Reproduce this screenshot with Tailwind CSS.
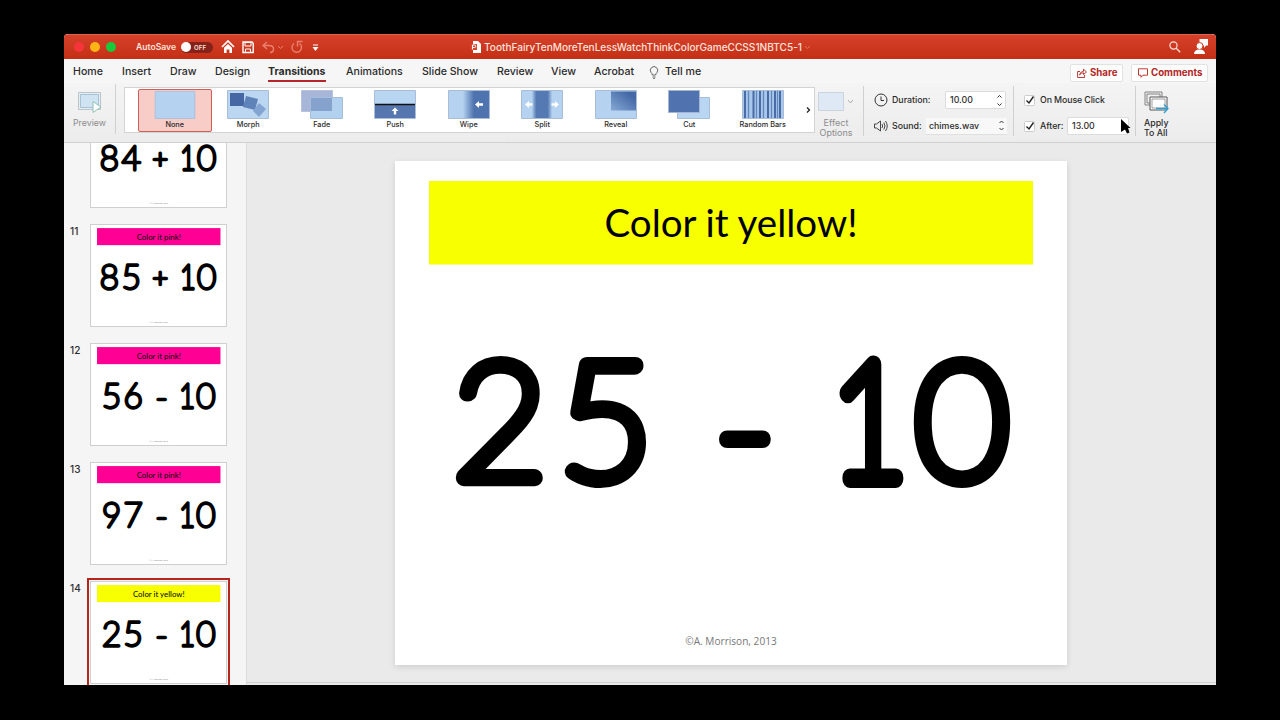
<!DOCTYPE html>
<html lang="en">
  <head>
    <meta charset="UTF-8" />
    <meta name="viewport" content="width=device-width, initial-scale=1.0" />
    <title>ToothFairyTenMoreTenLess</title>
    <script src="https://cdn.jsdelivr.net/npm/@tailwindcss/browser@4"></script>
  </head>
  <body class="bg-black w-[1280px] h-[720px] overflow-hidden pt-[34px] pl-16">
    <div
      class="w-[1152px] h-[651px] flex flex-col overflow-hidden rounded-t bg-[#f4f4f4] font-['Inter',sans-serif] text-[#2b2b2b]"
    >
      <!-- title bar -->
      <div
        class="h-[25px] shrink-0 flex items-center bg-linear-to-b from-[#d5402a] to-[#c43014] border-t border-[#dd6550] text-[#ffe3dc]"
      >
        <div class="flex gap-[5px] ml-[10px] w-[62px]">
          <div class="size-[10px] rounded-full bg-[#f5353a]"></div>
          <div class="size-[10px] rounded-full bg-[#fdb515] ml-px"></div>
          <div class="size-[10px] rounded-full bg-[#18c93c] ml-px"></div>
        </div>
        <div class="w-[45px] text-[8.600px] font-semibold whitespace-nowrap">AutoSave</div>
        <div class="w-8 h-[11px] rounded-full bg-[#85231a] flex items-center">
          <div class="size-[10px] rounded-full bg-white"></div>
          <div class="text-[6px] font-semibold ml-[3px] tracking-wide">OFF</div>
        </div>
        <svg class="w-[100px] h-4 ml-2" viewBox="0 0 100 16" fill="none">
          <path d="M1 8 7 2l6 6" stroke="#fff" stroke-width="1.600" />
          <path d="M3 8.800 7 5l4 3.800V14H8.400v-3.500H5.600V14H3z" fill="#fff" />
          <path d="M22 3h9l1.200 1.200V13.500H22z" stroke="#fff" stroke-width="1.400" />
          <path d="M24 3.500h6V7h-6zM24.500 10h5v3.500h-5z" stroke="#fff" />
          <g stroke="#ea806d" stroke-width="1.400">
            <path d="M46 3l-4 3.500 4 3.500M42 6.500h6q4.500 0 4.500 3.500T49 13.500" />
            <path d="M57 7l2.500 2.500L62 7" stroke-width="1" />
            <path d="M73 4.500a4.800 4.800 0 1 0 5.500 0M81.500 2.500h-5v5" />
          </g>
          <path d="M92 6h5" stroke="#fff" stroke-width="1.200" />
          <path d="M91.500 8h6l-3 4z" fill="#fff" />
        </svg>
        <div class="flex items-center ml-[149px] w-[345px]">
          <svg class="w-[11px] h-3 mr-[3px]" viewBox="0 0 11 12">
            <path d="M3 0h5l3 3v9H3z" fill="#fff" />
            <path d="M0 3h7v6H0z" fill="#d8452d" />
            <path d="M2.500 8.500V4h2a1 1 0 0 1 0 2.500h-2" stroke="#fff" fill="none" />
          </svg>
          <div class="text-[10.080px] font-medium w-[320px] pt-px whitespace-nowrap">ToothFairyTenMoreTenLessWatchThinkColorGameCCSS1NBTC5-1</div>
          <svg class="w-[7px] h-2" viewBox="0 0 7 8" fill="none" stroke="#e4745f"><path d="M1 3l2.500 2.500L6 3" /></svg>
        </div>
        <svg class="w-[40px] h-4 ml-auto mr-[7px]" viewBox="0 0 40 16" fill="none">
          <circle cx="4.500" cy="6.500" r="3.600" stroke="#ffe0d8" stroke-width="1.200" />
          <path d="M7.200 9.300l4 4" stroke="#ffe0d8" stroke-width="1.300" />
          <path d="M30.500 0h8.500v6.500h-2l-2 2.500V6.500h-4.500z" fill="#fff" />
          <circle cx="30.500" cy="7" r="3.500" fill="#fff" stroke="#cb3820" />
          <path d="M25 15q0-4.500 5.500-4.500t5.500 4.500z" fill="#fff" />
        </svg>
      </div>

      <!-- ribbon tabs -->
      <div
        class="h-[24px] shrink-0 flex items-center pl-[9px] pt-[2px] text-[10.600px] font-medium whitespace-nowrap bg-[#f6f6f6]"
      >
        <div class="w-[49px]">Home</div>
        <div class="w-[48px]">Insert</div>
        <div class="w-[45px]">Draw</div>
        <div class="w-[53px]">Design</div>
        <div class="w-[58px] mr-5 h-5 mt-[-1px] pt-[2px] border-b-2 border-[#b5252a] font-bold text-[10.500px] leading-4">Transitions</div>
        <div class="w-[76px]">Animations</div>
        <div class="w-[75px]">Slide Show</div>
        <div class="w-[54px]">Review</div>
        <div class="w-[43px]">View</div>
        <div class="w-[55px]">Acrobat</div>
        <svg class="w-[10px] h-[13px] mr-1.5" viewBox="0 0 10 13" fill="none" stroke="#555" stroke-width=".9">
          <path d="M3.300 9Q3.300 7.500 2 6.500a3.700 3.700 0 1 1 6 0Q6.700 7.500 6.700 9zM3.500 11h3M4.200 12.500h1.600" />
        </svg>
        <div>Tell me</div>
        <div class="ml-auto mr-2 flex gap-2 text-[9.700px] font-bold text-[#b3261e]">
          <div class="w-[53px] h-[18px] mt-[2px] bg-white border border-[#e2e2e2] rounded-xs flex items-center pl-1.5">
            <svg class="w-[10px] h-[10px] mr-[3px]" viewBox="0 0 10 10" fill="none" stroke="#b3261e" stroke-width=".9">
              <path d="M3 3.500H.600v6h7V7M2.500 7Q3 3.500 6.500 3.300V1.200L9.500 4 6.500 6.500V4.800Q4 4.800 2.500 7z" />
            </svg>
            Share
          </div>
          <div class="w-[77px] h-[18px] mt-[2px] bg-white border border-[#e2e2e2] rounded-xs flex items-center pl-1.5">
            <svg class="w-[10px] h-[10px] mr-[3px] shrink-0" viewBox="0 0 10 10" fill="none" stroke="#b3261e" stroke-width=".9">
              <path d="M.500.800h9v6.400H5L3 9.300V7.200H.500z" />
            </svg>
            Comments
          </div>
        </div>
      </div>

      <!-- ribbon -->
      <div class="h-[60px] shrink-0 flex bg-linear-to-b from-[#f4f4f4] to-[#ececec] border-b border-[#d0d0d0] whitespace-nowrap">
        <div class="w-[51px] pt-[9px] flex flex-col items-center text-[8.800px] text-[#8c8c8c]">
          <svg class="w-6 h-[22px] mb-[2px]" viewBox="0 0 24 22">
            <path d="M.500.500h22v17H.500z" fill="#e7ecef" stroke="#b9c4cb" />
            <path d="M2.500 2.500h18v13h-18z" fill="#cfe3f2" stroke="#a6c2d6" />
            <path d="M15 9.500v11l8-5.500z" fill="#fff" stroke="#8fc0b4" />
          </svg>
          Preview
        </div>
        <div class="w-[9px] h-[50px] mt-[1px] border-l border-[#d0d0d0]"></div>
        <div class="w-[691px] h-[46px] mt-1 bg-white border border-[#d4d4d4] flex items-center pl-[13px] text-[7.300px] font-medium">
          <div class="w-[73.500px] h-[43px] flex flex-col items-center pt-px bg-[#f8cdc8] border border-[#cf5f59] rounded-xs">
            <svg class="w-[42px] h-[28px] mb-px" viewBox="0 0 42 29"><path d="M.500.500h41v28H.500z" fill="#b5d3f1" stroke="#aac0dc" /></svg>
            <div>None</div>
          </div>
          <div class="w-[73.500px] flex flex-col items-center">
            <svg class="w-[42px] h-[29px] mb-px" viewBox="0 0 42 29">
              <path d="M.500.500h41v28H.500z" fill="#bad6f1" stroke="#aabdd8" />
              <path d="M3 3h14v13H3z" fill="#4666a4" />
              <path d="M19 6l12 3-3 11-12-3z" fill="#5f82b8" />
              <path d="M32 13l7 6-7 8-6-6z" fill="#84a5d2" />
            </svg>
            <div>Morph</div>
          </div>
          <div class="w-[73.500px] flex flex-col items-center">
            <svg class="w-[42px] h-[29px] mb-px" viewBox="0 0 42 29">
              <path d="M.500.500h31v21H.500z" fill="#a7b5d8" stroke="#b9c2dc" />
              <path d="M9.500 7.500h32v21h-32z" fill="#b2d1ef" stroke="#a4bedb" />
              <path d="M10 8h21v13H10z" fill="#85a2cc" />
            </svg>
            <div>Fade</div>
          </div>
          <div class="w-[73.500px] flex flex-col items-center">
            <svg class="w-[42px] h-[29px] mb-px" viewBox="0 0 42 29">
              <path d="M.500.500h41v28H.500z" fill="#b8d5f2" stroke="#aabdd8" />
              <path d="M1 15h40v13H1z" fill="#5676b0" />
              <path d="M1 14.500h40" stroke="#111" stroke-width="1.500" />
              <path d="M21 17.500l-3.500 3.500h2.300v3.500h2.400V21h2.300z" fill="#fff" />
            </svg>
            <div>Push</div>
          </div>
          <div class="w-[73.500px] flex flex-col items-center">
            <svg class="w-[42px] h-[29px] mb-px" viewBox="0 0 42 29">
              <defs>
                <linearGradient id="wipe"><stop offset=".35" stop-color="#b5d3f1" /><stop offset=".62" stop-color="#4f73ae" /></linearGradient>
              </defs>
              <path d="M.500.500h41v28H.500z" fill="url(#wipe)" stroke="#aabdd8" />
              <path d="M27 14.500l4-3.500v2.300h4v2.400h-4V18z" fill="#fff" />
            </svg>
            <div>Wipe</div>
          </div>
          <div class="w-[73.500px] flex flex-col items-center">
            <svg class="w-[42px] h-[29px] mb-px" viewBox="0 0 42 29">
              <defs>
                <linearGradient id="split"><stop offset=".25" stop-color="#b5d3f1" /><stop offset=".36" stop-color="#5579b3" /><stop offset=".64" stop-color="#5579b3" /><stop offset=".75" stop-color="#b5d3f1" /></linearGradient>
              </defs>
              <path d="M.500.500h41v28H.500z" fill="url(#split)" stroke="#aabdd8" />
              <path d="M4 14.500l4-3.500v2.300h3.500v2.400H8V18zM38 14.500L34 11v2.300h-3.500v2.400H34V18z" fill="#fff" />
            </svg>
            <div>Split</div>
          </div>
          <div class="w-[73.500px] flex flex-col items-center">
            <svg class="w-[42px] h-[29px] mb-px" viewBox="0 0 42 29">
              <defs>
                <linearGradient id="reveal" x1="0" y1="1" x2="1" y2="0"><stop stop-color="#86a9d5" /><stop offset=".8" stop-color="#4468a6" /></linearGradient>
              </defs>
              <path d="M.500.500h41v28H.500z" fill="#b5d3f1" stroke="#aabdd8" />
              <path d="M16 1.500h25v19H16z" fill="url(#reveal)" />
            </svg>
            <div>Reveal</div>
          </div>
          <div class="w-[73.500px] flex flex-col items-center">
            <svg class="w-[42px] h-[29px] mb-px" viewBox="0 0 42 29">
              <path d="M9.500 7.500h32v21h-32z" fill="#b8d5f2" stroke="#aabdd8" />
              <path d="M.500.500h31v22H.500z" fill="#5073b0" stroke="#a6b5d3" />
            </svg>
            <div>Cut</div>
          </div>
          <div class="w-[73.500px] flex flex-col items-center">
            <svg class="w-[42px] h-[29px] mb-px" viewBox="0 0 42 29">
              <path d="M.500.500h41v28H.500z" fill="#a9c7ea" stroke="#aabdd8" />
              <path d="M3 1v27M11.500 1v27M18 1v27M26 1v27M33 1v27M38 1v27" stroke="#496ca9" stroke-width="2" />
              <path d="M6.500 1v27M14.500 1v27M21.500 1v27M29.500 1v27M35.500 1v27" stroke="#6287be" stroke-width="1.300" />
            </svg>
            <div>Random Bars</div>
          </div>
          <svg class="w-[5px] h-2 ml-[6px]" viewBox="0 0 5 8" fill="none" stroke="#222" stroke-width="1.300"><path d="M1 1.500L3.500 4 1 6.500" /></svg>
        </div>
        <div class="w-[48px] pt-[9px] text-[9px] text-[#8c8c8c] text-center leading-[9.500px]">
          <svg class="w-[36px] h-[20px] ml-[2px] mb-[6px]" viewBox="0 0 36 20" fill="none">
            <path d="M1.500.500h25v18h-25z" fill="#dfe9f6" stroke="#cbd3de" />
            <path d="M31 8l2.500 3L36 8" stroke="#aaa" />
          </svg>
          <div class="-ml-[6px]">Effect<br />Options</div>
        </div>
        <div class="w-[11px] h-[50px] mt-[3px] border-l border-[#d0d0d0]"></div>
        <div class="w-[139px] pt-[8px] text-[8.800px] font-medium">
          <div class="flex items-center h-[18px] mb-[8px]">
            <svg class="size-[14px] mr-1" viewBox="0 0 14 14" fill="none" stroke="#333"><circle cx="7" cy="7" r="6" /><path d="M7 3.500V7.500h3" /></svg>
            <div class="w-[53px]">Duration:</div>
            <div class="w-[61px] h-[18px] bg-white border border-[#dcdcdc] rounded-xs flex items-center justify-between pl-1 pr-[3px]">
              10.00
              <svg class="w-[5px] h-[13px]" viewBox="0 0 5 13" fill="none" stroke="#333"><path d="M.500 3.500l2-2 2 2M.500 9.500l2 2 2-2" /></svg>
            </div>
          </div>
          <div class="flex items-center h-[18px]">
            <svg class="size-[14px] mr-1" viewBox="0 0 14 14" fill="none" stroke="#333" stroke-width=".9">
              <path d="M.500 5H2.500L6.500 2v10L2.500 9H.500zM8 5q1.300 2 0 4M9.800 3.500q2.400 3.500 0 7M11.500 2q3.500 5 0 10" />
            </svg>
            <div class="w-[34px]">Sound:</div>
            <div class="w-[81px] h-[17px] bg-[#f8f8f8] border-b border-[#e0e0e0] flex items-center justify-between pl-[3px] pr-[3px]">
              chimes.wav
              <svg class="w-[5px] h-[11px]" viewBox="0 0 5 11" fill="none" stroke="#333"><path d="M.500 3l2-2 2 2M.500 8l2 2 2-2" /></svg>
            </div>
          </div>
        </div>
        <div class="w-[11px] h-[50px] mt-[3px] border-l border-[#d0d0d0]"></div>
        <div class="relative w-[111px] pt-[8px] text-[8.800px] font-medium">
          <div class="flex items-center h-[18px] mb-[8px]">
            <svg class="w-[11px] h-[11px] mr-[5px]" viewBox="0 0 11 11" fill="none"><rect x=".500" y=".500" width="10" height="10" rx="1" fill="#fff" stroke="#ccc" /><path d="M2.500 5.500L5 8l4.500-6.500" stroke="#222" stroke-width="1.400" /></svg>
            <div class="tracking-[-0.1px]">On Mouse Click</div>
          </div>
          <div class="flex items-center h-[18px]">
            <svg class="w-[11px] h-[11px] mr-[5px]" viewBox="0 0 11 11" fill="none"><rect x=".500" y=".500" width="10" height="10" rx="1" fill="#fff" stroke="#ccc" /><path d="M2.500 5.500L5 8l4.500-6.500" stroke="#222" stroke-width="1.400" /></svg>
            <div class="w-[27px]">After:</div>
            <div class="w-[62px] h-[18px] bg-white border border-[#dcdcdc] rounded-xs flex items-center pl-1">13.00</div>
          </div>
          <!-- mouse pointer over the stepper -->
          <svg class="absolute left-[97px] top-[36px] w-[12px] h-[16px]" viewBox="0 0 12 16"><path d="M0 0l9.500 9H7L8.500 13.500l-2.500 1-2-4L0 13z" fill="#000" /></svg>
        </div>
        <div class="w-[9px] h-[50px] mt-[3px] border-l border-[#d0d0d0]"></div>
        <div class="pt-[8px] text-[8.800px] font-medium leading-[9.500px]">
          <svg class="w-[25px] h-[23px] mb-[4px]" viewBox="0 0 25 23" fill="none">
            <path d="M1 1h17v13H1zM3 3h13v9H3z" stroke="#777" stroke-width=".9" />
            <path d="M6 6h17v13H6z" fill="#fff" stroke="#555" />
            <path d="M8 8h13v9H8z" stroke="#888" stroke-width=".8" />
            <path d="M12 17.500h12M20 13.500l4 4-4 4.500" stroke="#2f9fd0" stroke-width="1.300" />
          </svg>
          <div>Apply<br />To All</div>
        </div>
      </div>

      <div class="flex-1 min-h-0 flex">
        <!-- slide thumbnails -->
        <div class="w-[183px] bg-[#f5f5f5] border-r border-[#dcdcdc] overflow-hidden">
          <div id="thumbs" class="-mt-[38px] flex flex-col gap-4"></div>
        </div>

        <!-- current slide -->
        <div class="flex-1 bg-[#eaeaea] flex flex-col pt-[18px] pl-[148px]">
          <div class="w-[672px] h-[504px] bg-white shadow-[0_2px_6px_rgba(0,0,0,0.12)]">
            <svg class="w-full h-full" viewBox="0 0 672 504" id="slide"></svg>
          </div>
          <div class="mt-auto -ml-[148px] h-[3px] border-t border-[#cfcfcf]"></div>
        </div>
      </div>
    </div>

    <script>
      const slides = [
        { no: "", a: "84", op: "+", color: "#ff0095", label: "Color it pink!" },
        { no: "11", a: "85", op: "+", color: "#ff0095", label: "Color it pink!" },
        { no: "12", a: "56", op: "-", color: "#ff0095", label: "Color it pink!" },
        { no: "13", a: "97", op: "-", color: "#ff0095", label: "Color it pink!" },
        { no: "14", a: "25", op: "-", color: "#f7ff00", label: "Color it yellow!" },
      ];

      // everything on a slide, in slide units (672 x 504)
      const slideContent = (s) => {
        const plus = s.op === "+";
        return `
        <rect x="34" y="20" width="604" height="83.500" fill="${s.color}" />
        <text x="336" y="76" text-anchor="middle" class="font-['Lato','Open_Sans',sans-serif] text-[38.500px]">${s.label}</text>
        <g class="font-['Lato',sans-serif] font-thin text-[162px]" fill="#000" stroke="#000" stroke-width="16" stroke-linejoin="round">
          <text y="318" x="${plus ? "47 155" : "58 164"}">${s.a}</text>
          ${
            plus
              ? `<text x="343" y="310" text-anchor="middle" class="text-[130px]">+</text>`
              : `<text x="350" y="326" text-anchor="middle">-</text>`
          }
          <text y="318" x="${plus ? 440 : 436}" textLength="77" lengthAdjust="spacingAndGlyphs" stroke-width="18">1</text>
          <text y="318" x="${plus ? 523 : 520}">0</text>
        </g>
        <text x="336" y="484" text-anchor="middle" fill="#777" class="font-['Open_Sans',sans-serif] text-[10.100px]">©A. Morrison, 2013</text>
      `;
      };

      document.getElementById("slide").innerHTML = slideContent(slides[4]);

      document.getElementById("thumbs").innerHTML = slides
        .map(
          (s) => `
          <div class="flex h-[103px]">
            <div class="w-[25.500px] pl-[6px] text-[10px] font-medium">${s.no}</div>
            <div class="w-[137.500px] h-[103px] bg-white ring-1 ring-inset ring-[#cfcfcf] ${
              s.no === "14" ? "outline-2 outline-offset-1 outline-[#b5251c]" : ""
            }">
              <svg class="w-full h-full" viewBox="0 0 672 504">${slideContent(s)}</svg>
            </div>
          </div>`
        )
        .join("");
    </script>
  </body>
</html>
